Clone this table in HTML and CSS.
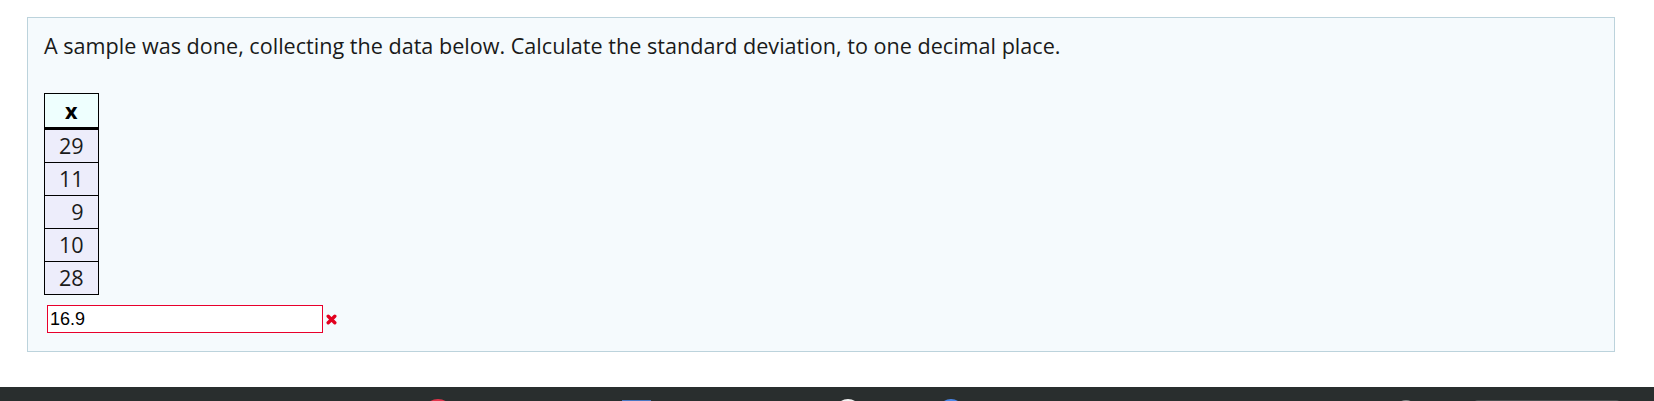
FILE: index.html
```html
<!DOCTYPE html>
<html>
<head>
<meta charset="utf-8">
<link rel="stylesheet" href="styles.css">
</head>
<body>
<div class="page">
  <div class="question">
    <p class="prompt">A sample was done, collecting the data below. Calculate the standard deviation, to one decimal place.</p>
    <table class="data">
      <thead><tr><th>x</th></tr></thead>
      <tbody>
        <tr><td>29</td></tr>
        <tr><td>11</td></tr>
        <tr><td>9</td></tr>
        <tr><td>10</td></tr>
        <tr><td>28</td></tr>
      </tbody>
    </table>
    <div class="answer">
      <input class="ans" type="text" value="16.9" readonly>
      <svg class="mark" width="11" height="11" viewBox="0 0 11 11"><path d="M2.2 2.2 L8.8 8.8 M8.8 2.2 L2.2 8.8" stroke="#e2001f" stroke-width="3.4" stroke-linecap="round"/></svg>
    </div>
  </div>
</div>
<div class="taskbar">
  <span class="tb-icon red"></span>
  <span class="tb-icon bluesq"></span>
  <span class="tb-icon white"></span>
  <span class="tb-icon blue"></span>
  <span class="tb-icon gray"></span>
  <span class="tb-icon graybar"></span>
</div>
</body>
</html>
```
FILE: styles.css
```css
html, body {
  margin: 0;
  padding: 0;
  background: #ffffff;
  overflow: hidden;
}
body {
  font-family: "Open Sans", "Noto Sans", sans-serif;
  color: #1a1a1a;
}
.page {
  padding: 17px 39px 35px 27px;
}
.question {
  background: #f5fafd;
  border: 1px solid #bcd3dc;
  padding: 14px 16px 17px 16px;
  box-sizing: border-box;
  height: 335px;
}
.prompt {
  margin: 0 0 33px 0;
  font-size: 21.6px;
  line-height: 28px;
}
.data {
  border-collapse: collapse;
  font-size: 21.6px;
  line-height: 28px;
}
.data th {
  background: #eefffe;
  border: 1px solid #000;
  border-bottom: 3px solid #000;
  font-weight: bold;
  padding: 3px 14px 2px 14px;
  text-align: center;
  color: #000;
}
.data td {
  background: #ededfb;
  border: 1px solid #000;
  padding: 2px 14px 2px 14px;
  text-align: right;
}
.answer {
  display: flex;
  align-items: center;
  gap: 3px;
  margin-top: 10px;
  padding-left: 3px;
}
.ans {
  width: 276px;
  height: 28px;
  box-sizing: border-box;
  border: 1px solid #e8002c;
  background: #fff;
  font-family: "Liberation Sans", Arial, sans-serif;
  font-size: 18px;
  padding: 0 2px;
  color: #000;
  outline: none;
  margin: 0;
}
.mark {
  display: block;
}
.taskbar {
  height: 14px;
  overflow: hidden;
  background: #292e2e;
  display: flex;
  align-items: flex-start;
  padding-top: 12px;
  box-sizing: border-box;
}
.tb-icon {
  display: block;
  flex: none;
}
.red {
  width: 30px; height: 30px; border-radius: 50%;
  background: #e3344a;
  margin-left: 423px;
}
.bluesq {
  width: 29px; height: 26px;
  background: #4a78c4;
  margin-left: 169px;
  margin-top: 1px;
}
.white {
  width: 26px; height: 26px; border-radius: 50%;
  background: #f2f2f2;
  margin-left: 184px;
}
.blue {
  width: 26px; height: 26px; border-radius: 50%;
  background: #4a86e8;
  margin-left: 77px;
}
.gray {
  width: 22px; height: 22px; border-radius: 50%;
  background: #8a8e8e;
  margin-left: 431px;
  margin-top: 1px;
}
.graybar {
  width: 146px; height: 20px;
  background: #4a4f4f;
  margin-left: 57px;
  margin-top: 1px;
  border-radius: 4px;
}
```
